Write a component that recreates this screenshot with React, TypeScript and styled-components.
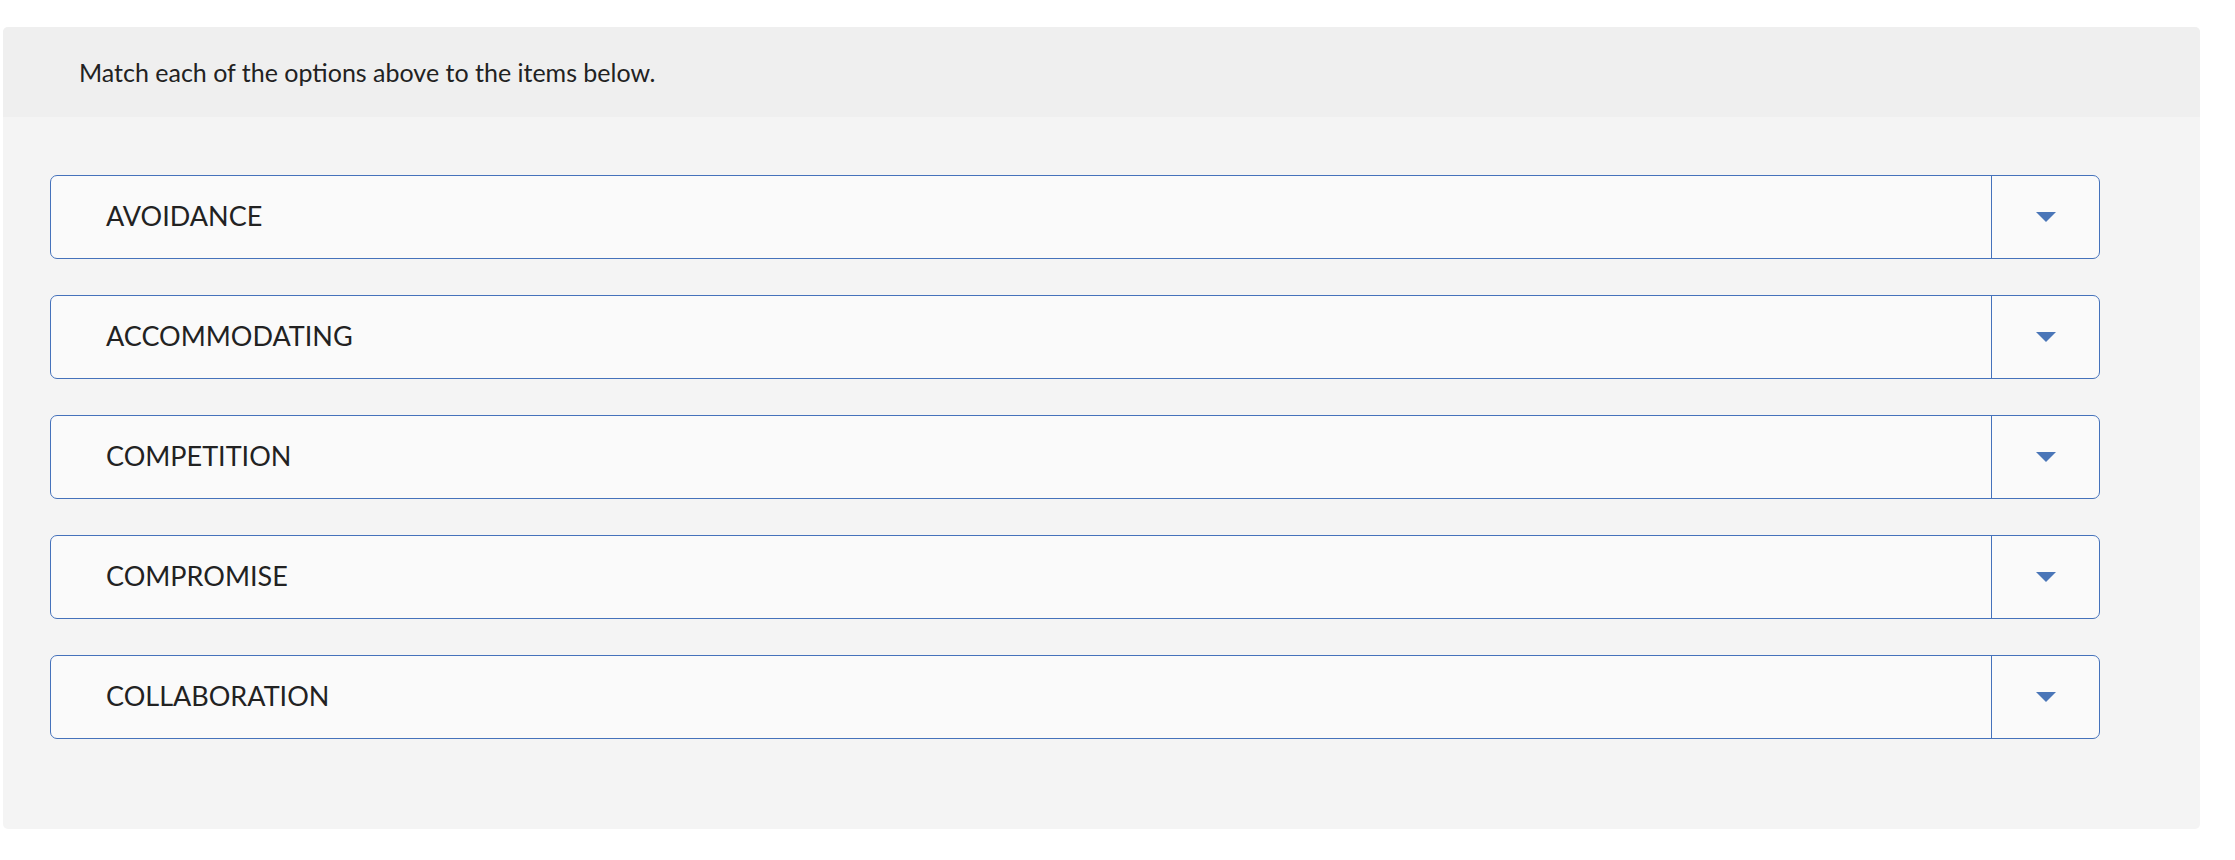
import React from "react";
import styled, { createGlobalStyle } from "styled-components";

const GlobalStyle = createGlobalStyle`
  html, body { margin: 0; padding: 0; background: #ffffff; }
  body { font-family: Lato, "Liberation Sans", Arial, sans-serif; color: #222222; }
`;

const Page = styled.div`
  padding: 27px 0 0 3px;
`;

const Panel = styled.section`
  width: 2197px;
  background: #f4f4f4;
  border-radius: 5px;
  overflow: hidden;
`;

const Header = styled.div`
  height: 90px;
  background: #efefef;
  display: flex;
  align-items: center;
  padding-left: 76px;
  font-size: 25px;
  line-height: 1;
  color: #222222;
`;

const Body = styled.div`
  display: flex;
  flex-direction: column;
  gap: 36px;
  padding: 58px 0 90px 47px;
`;

const Select = styled.div`
  width: 2050px;
  height: 84px;
  box-sizing: border-box;
  display: flex;
  border: 1px solid #4572bb;
  border-radius: 7px;
  background: #fafafa;
`;

const Label = styled.div`
  flex: 1;
  display: flex;
  align-items: center;
  padding: 0 0 3px 55px;
  font-size: 27px;
  line-height: 1;
  color: #222222;
  border-right: 1px solid #4572bb;
`;

const Toggle = styled.div`
  width: 107px;
  display: flex;
  align-items: center;
  justify-content: center;
`;

const Caret = styled.span`
  width: 0;
  height: 0;
  border-left: 10px solid transparent;
  border-right: 10px solid transparent;
  border-top: 10px solid #4a76b8;
`;

const items = ["AVOIDANCE", "ACCOMMODATING", "COMPETITION", "COMPROMISE", "COLLABORATION"];

export default function App() {
  return (
    <>
      <GlobalStyle />
      <Page>
        <Panel>
          <Header>Match each of the options above to the items below.</Header>
          <Body>
            {items.map((item) => (
              <Select key={item}>
                <Label>{item}</Label>
                <Toggle>
                  <Caret />
                </Toggle>
              </Select>
            ))}
          </Body>
        </Panel>
      </Page>
    </>
  );
}
